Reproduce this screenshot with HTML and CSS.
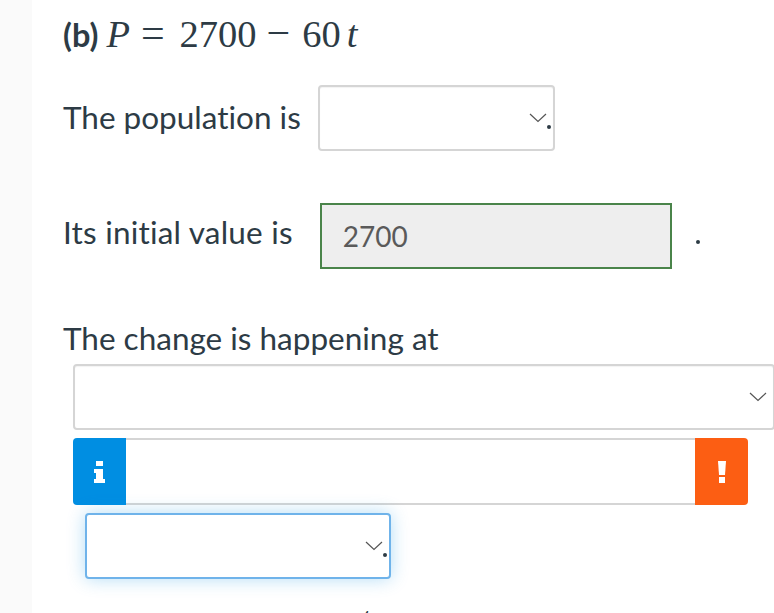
FILE: index.html
```html
<!DOCTYPE html>
<html>
	<head>
		<meta charset="UTF-8">
		<title>Population</title>
		<link rel="stylesheet" href="styles.css">
	</head>
	<body>
		<div class="side"></div>
		<div class="main">
			<div class="formula"><b>(b)</b><span class="math"><i class="p">P</i><span class="eq">=</span><span>2700</span><span class="minus">&minus;</span><span>60</span><i class="t">t</i></span></div>

			<div class="line line1">
				<span>The population is</span>
				<div class="select small">
					<svg class="chev" width="18" height="10" viewBox="0 0 18 10"><path d="M1 1 L9 8.500 L17 1" fill="none" stroke="#555" stroke-width="1.200"/></svg>
				</div>
				<span class="dot"></span>
			</div>

			<div class="line line2">
				<span>Its initial value is</span>
				<div class="answer">2700</div>
				<span class="dot dot2"></span>
			</div>

			<div class="change">The change is happening at</div>

			<div class="indent">
				<div class="select wide">
					<svg class="chev" width="18" height="10" viewBox="0 0 18 10"><path d="M1 1 L9 8.500 L17 1" fill="none" stroke="#555" stroke-width="1.200"/></svg>
				</div>
				<div class="group">
					<div class="info">
						<svg width="11" height="22" viewBox="0 0 11 22" fill="white"><rect x="2" y="0" width="7" height="5"/><path d="M0 8 H9 V18 H11 V22 H0 V18 H2 V12 H0 Z"/></svg>
					</div>
					<div class="field"></div>
					<div class="warn">
						<svg width="8" height="22" viewBox="0 0 8 22" fill="white"><path d="M0 0 H8 L7 14 H1 Z"/><rect x="1" y="16" width="6" height="6"/></svg>
					</div>
				</div>
				<div class="line line3">
					<div class="select focus">
						<svg class="chev" width="18" height="10" viewBox="0 0 18 10"><path d="M1 1 L9 8.500 L17 1" fill="none" stroke="#555" stroke-width="1.200"/></svg>
					</div>
					<span class="dot"></span>
				</div>
				<div class="next"><i>t</i></div>
			</div>
		</div>
	</body>
</html>
```

FILE: styles.css
```css
*{
	box-sizing: border-box;
}
html,body{
	margin: 0;
	height: 100%;
	overflow: hidden;
}
body{
	display: flex;
	background: white;
	color: #2d3b45;
	font-family: "Lato", "Liberation Sans", sans-serif;
	font-size: 31.500px;
	font-variant-ligatures: none;
}
.side{
	width: 32px;
	flex-shrink: 0;
	background: #fafafa;
}
.main{
	flex: 1;
	min-width: 0;
	padding: 13px 0 0 31px;
}
.formula{
	height: 40px;
	line-height: 40px;
	white-space: nowrap;
	font-size: 32.500px;
}
.formula b{
	font-weight: 700;
}
.math{
	font-family: "Liberation Serif", serif;
	font-size: 38.500px;
	margin-left: 8px;
}
.eq{
	font-size: 42px;
	margin: 0 15px 0 11px;
}
.minus{
	font-size: 42px;
	margin: 0 12px 0 10px;
}
.t{
	margin-left: 6px;
}
.line{
	display: flex;
	align-items: center;
	white-space: nowrap;
}
.line1{
	margin-top: 32px;
}
.line1 span:first-child{
	margin-right: 17px;
	margin-top: -2px;
}
.line2{
	margin-top: 52px;
}
.line2 span:first-child{
	margin-right: 27px;
	margin-top: -9px;
	letter-spacing: 0.200px;
}
.select{
	display: flex;
	align-items: center;
	justify-content: flex-end;
	height: 66px;
	background: white;
	border: 2px solid #d5d5d5;
	border-radius: 4px;
	flex-shrink: 0;
	box-shadow: inset 0 1px 1px rgba(0,0,0,0.05);
}
.chev{
	margin-right: 6px;
}
.small{
	width: 237px;
}
.dot{
	width: 4px;
	height: 4px;
	border-radius: 50%;
	background: #2d3b45;
	margin-left: -8px;
	margin-top: 18px;
}
.answer{
	width: 352px;
	height: 66px;
	padding-left: 21px;
	line-height: 62px;
	font-size: 28px;
	color: #5a5a5a;
	background: #eeeeee;
	border: 2px solid #4a844a;
}
.dot2{
	margin-left: 24px;
	margin-top: 12px;
}
.change{
	line-height: 40px;
	height: 40px;
	margin-top: 49px;
}
.indent{
	margin-left: 10px;
	margin-top: 6px;
}
.wide{
	width: 702px;
}
.group{
	display: flex;
	width: 675px;
	height: 67px;
	margin-top: 8px;
}
.info,.warn{
	width: 53px;
	flex-shrink: 0;
	display: flex;
	align-items: center;
	justify-content: center;
}
.info{
	background: #008ee2;
	border-radius: 4px 0 0 4px;
}
.warn{
	background: #fc5e13;
	border-radius: 0 4px 4px 0;
}
.field{
	flex: 1;
	border: 2px solid #d5d5d5;
	border-left: none;
	border-right: none;
}
.line3{
	margin: 8px 0 0 12px;
}
.focus{
	width: 306px;
	border-color: #6fb3ea;
	box-shadow: 0 0 18px rgba(0,142,226,0.3);
}
.next{
	margin: 21px 0 0 287px;
	line-height: 40px;
	font-family: "Liberation Serif", serif;
	font-size: 38.500px;
}
```
